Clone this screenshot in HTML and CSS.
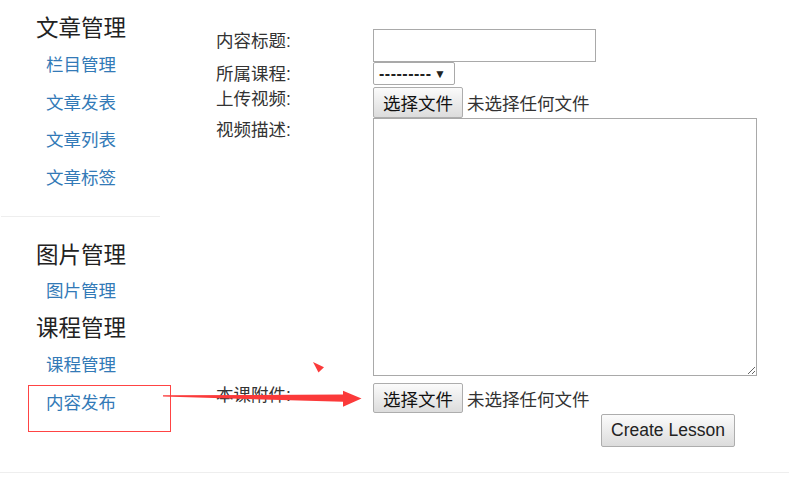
FILE: index.html
```html
<!DOCTYPE html>
<html lang="zh-CN">
<head>
<meta charset="utf-8">
<title>内容发布</title>
<link rel="stylesheet" href="styles.css">
</head>
<body>
<div class="layout">
  <aside class="sidebar">
    <section class="group group-first">
      <h4 class="group-title">文章管理</h4>
      <ul class="links">
        <li><a href="#">栏目管理</a></li>
        <li><a href="#">文章发表</a></li>
        <li><a href="#">文章列表</a></li>
        <li><a href="#">文章标签</a></li>
      </ul>
    </section>
    <hr class="divider">
    <section class="group group-second">
      <h4 class="group-title">图片管理</h4>
      <ul class="links">
        <li><a href="#">图片管理</a></li>
      </ul>
      <h4 class="group-title group-title-next">课程管理</h4>
      <ul class="links links-last">
        <li><a href="#">课程管理</a></li>
        <li><a href="#">内容发布</a></li>
      </ul>
    </section>
  </aside>
  <main class="main">
    <form class="form">
      <div class="row row-title">
        <label class="label">内容标题:</label>
        <input class="text-input" type="text">
      </div>
      <div class="row row-select">
        <label class="label">所属课程:</label>
        <div class="select"><span class="select-text">---------</span><span class="select-arrow">▼</span></div>
      </div>
      <div class="row row-file">
        <label class="label">上传视频:</label>
        <span class="file-btn">选择文件</span><span class="file-note">未选择任何文件</span>
      </div>
      <div class="row row-desc">
        <label class="label">视频描述:</label>
        <textarea class="textarea"></textarea>
      </div>
      <div class="row row-file row-attach">
        <label class="label">本课附件:</label>
        <span class="file-btn">选择文件</span><span class="file-note">未选择任何文件</span>
      </div>
      <div class="row row-submit">
        <button class="submit" type="button">Create Lesson</button>
      </div>
    </form>
  </main>
</div>
<div class="mark-box"></div>
<svg class="annot" width="789" height="477" viewBox="0 0 789 477">
  <polygon points="313,362 324,367.3 318.5,372.5" fill="#fb3a3a"/>
  <polygon points="163,395.2 343,394.6 343,390.8 361.5,398.4 343,406.8 343,401.8 163,396.4" fill="#fb3a3a"/>
</svg>
</body>
</html>
```

FILE: styles.css
```css
* { box-sizing: border-box; }

html, body {
  margin: 0;
  padding: 0;
  background: #fff;
}

body {
  font-family: "Liberation Sans", "Noto Sans CJK SC", sans-serif;
  font-size: 17.5px;
  color: #333;
  position: relative;
  width: 789px;
  height: 477px;
  overflow: hidden;
}

.layout {
  display: flex;
  height: 472px;
  border-bottom: 1px solid #eee;
  box-sizing: content-box;
}

.sidebar {
  width: 160px;
  flex: none;
}

.group {
  padding-left: 36px;
}

.group-title {
  margin: 0;
  font-size: 22.5px;
  font-weight: normal;
  line-height: 26px;
  color: #222;
}

.group-first .group-title {
  margin-top: 16px;
}

.group-first .links {
  margin-top: 5px;
}

.group-title-next {
  margin-top: 6px;
}

.group-second {
  padding-top: 26px;
}

.links {
  list-style: none;
  margin: 4px 0 0;
  padding: 0 0 0 10px;
}

.links-last {
  margin-top: 5px;
}

.links li {
  line-height: 37.7px;
  height: 37.7px;
}

.links a {
  color: #337ab7;
  text-decoration: none;
  font-size: 17.5px;
}

.divider {
  margin: 18px 0 0 1px;
  width: 159px;
  border: 0;
  border-top: 1px solid #eee;
  height: 0;
}

.main {
  flex: 1;
  padding-left: 56px;
  padding-top: 29px;
}

.form {
  display: flex;
  flex-direction: column;
}

.row {
  display: flex;
  align-items: flex-start;
}

.label {
  width: 157px;
  flex: none;
  line-height: 24px;
  color: #333;
}

.text-input {
  width: 223px;
  height: 33px;
  margin: 0;
  border: 1px solid #a9a9a9;
  padding: 0 4px;
  font: inherit;
  background: #fff;
}

.row-select {
  height: 25px;
}

.select {
  width: 82px;
  height: 23px;
  border: 1px solid #a9a9a9;
  border-radius: 2px;
  display: flex;
  align-items: center;
  justify-content: space-between;
  padding: 0 8px 0 5px;
  background: #fff;
}

.select-text {
  font-size: 16px;
  font-weight: bold;
  line-height: 20px;
  color: #222;
  letter-spacing: 0.5px;
}

.select-arrow {
  font-size: 12px;
  color: #222;
  line-height: 20px;
}

.row-file {
  height: 31px;
  align-items: center;
}

.row-file .label {
  align-self: flex-start;
}

.file-btn {
  width: 90px;
  height: 31px;
  flex: none;
  display: flex;
  align-items: center;
  justify-content: center;
  border: 1px solid #adadad;
  border-radius: 2px;
  background: linear-gradient(#fbfbfb, #dcdcdc);
  color: #111;
  font-size: 17.5px;
}

.file-note {
  margin-left: 4px;
  color: #333;
  font-size: 17.5px;
}

.textarea {
  width: 384px;
  height: 258px;
  margin: 0;
  border: 1px solid #a9a9a9;
  resize: both;
  font: inherit;
  display: block;
}

.row-attach {
  margin-top: 7px;
  height: 30px;
}

.row-attach .file-btn {
  height: 30px;
}

.row-submit {
  margin-top: 1px;
  padding-left: 385px;
}

.submit {
  width: 134px;
  height: 33px;
  margin: 0;
  border: 1px solid #adadad;
  border-radius: 2px;
  background: linear-gradient(#fbfbfb, #dcdcdc);
  font-family: "Liberation Sans", Arial, sans-serif;
  font-size: 17.5px;
  color: #222;
  padding: 0;
}

.mark-box {
  position: absolute;
  left: 28px;
  top: 385px;
  width: 143px;
  height: 47px;
  border: 1px solid #f44;
  pointer-events: none;
}

.annot {
  position: absolute;
  left: 0;
  top: 0;
  pointer-events: none;
}
```
